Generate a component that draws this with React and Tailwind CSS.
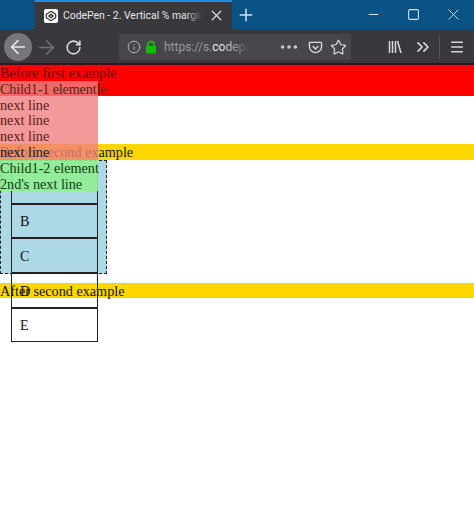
import { ArrowLeft, ArrowRight, RotateCw, Info, Ellipsis, Star, Plus, Minus, Square, X, Menu, ChevronsRight } from 'lucide-react'

function Box({ label }) {
  return (
    <div className="h-[34.7px] w-[86.5px] border border-[#222] pl-2 pt-[2px] flex items-center text-[14.2px] text-[#111]">{label}</div>
  )
}

function Browser() {
  return (
    <header className="font-['Roboto',sans-serif]">
      <div className="h-[29px] bg-[#0b5285] flex items-stretch">
        <div className="w-[35px]" />
        <div className="w-[197px] bg-[#38383d] border-t-2 border-[#1f8fe8] flex items-center pl-[9px] pr-[7px] gap-[5px]">
          <div className="w-[14px] h-[14px] rounded-[2px] bg-white flex items-center justify-center shrink-0">
            <svg viewBox="0 0 14 14" className="w-[12px] h-[12px]" fill="none" stroke="#222" strokeWidth="1.3">
              <path d="M7 1.500 12.500 5v4L7 12.500 1.500 9V5Z" />
              <path d="M7 5 9.500 7 7 9 4.500 7Z" />
            </svg>
          </div>
          <div className="relative flex-1 overflow-hidden">
            <span className="block text-[10.4px] text-[#e8e8ea] whitespace-nowrap">CodePen - 2. Vertical % margin</span>
            <div className="absolute right-0 top-0 bottom-0 w-[18px] bg-gradient-to-r from-transparent to-[#38383d]" />
          </div>
          <X className="w-[17px] h-[17px] text-[#d8d8da] shrink-0" strokeWidth={1.8} />
        </div>
        <div className="w-[27px] flex items-center justify-center">
          <Plus className="w-[20px] h-[20px] text-[#cfe3f2]" strokeWidth={1.8} />
        </div>
        <div className="flex-1 flex items-center justify-end pr-px">
          <div className="w-[40px] flex justify-center"><Minus className="w-[15px] h-[15px] text-[#cfe3f2]" strokeWidth={1.6} /></div>
          <div className="w-[40px] flex justify-center"><Square className="w-[13px] h-[13px] text-[#cfe3f2]" strokeWidth={2} /></div>
          <div className="w-[40px] flex justify-center"><X className="w-[19px] h-[19px] text-[#cfe3f2]" strokeWidth={1.2} /></div>
        </div>
      </div>
      <div className="h-[36px] pt-[2px] bg-[#38383d] border-b-2 border-[#3a1414] flex items-center">
        <div className="ml-[4px] w-[28px] h-[28px] shrink-0 rounded-full bg-[#77777b] flex items-center justify-center">
          <ArrowLeft className="w-[22px] h-[22px] text-[#e8e8ea]" strokeWidth={1.7} />
        </div>
        <ArrowRight className="ml-[3px] w-[23px] h-[23px] text-[#737377] shrink-0" strokeWidth={1.7} />
        <RotateCw className="ml-[7px] w-[17px] h-[17px] text-[#d8d8da] shrink-0" strokeWidth={2.2} />
        <div className="ml-[37px] w-[232px] h-[26px] shrink-0 rounded-[2px] bg-[#47474b] flex items-center pl-[8px] pr-[4px]">
          <Info className="w-[14px] h-[14px] text-[#b4b4b8]" strokeWidth={1.7} />
          <svg viewBox="0 0 12 14" className="ml-[4px] w-[12px] h-[14px]" fill="none">
            <path d="M3 7V4.500a3 3 0 0 1 6 0V7" stroke="#12bc00" strokeWidth="1.800" />
            <rect x="1" y="6" width="10" height="7.500" rx="1" fill="#12bc00" />
          </svg>
          <div className="relative ml-[7px] w-[85px] overflow-hidden">
            <span className="block whitespace-nowrap text-[12px] text-[#98989c]">https://s.<span className="text-[#e8e8ea]">codepe</span></span>
            <div className="absolute right-0 top-0 bottom-0 w-[28px] bg-gradient-to-r from-transparent to-[#47474b]" />
          </div>
          <Ellipsis className="ml-auto w-[22px] h-[22px] text-[#c8c8cc]" strokeWidth={2} />
          <svg viewBox="0 0 16 16" className="ml-[8px] w-[15px] h-[15px]" fill="none" stroke="#d8d8da" strokeWidth="1.500">
            <path d="M2.500 2.500h11a1 1 0 0 1 1 1V7a6.500 6.500 0 0 1-13 0V3.500a1 1 0 0 1 1-1Z" />
            <path d="M5 6.500 8 9.500l3-3" />
          </svg>
          <Star className="ml-[7px] w-[17px] h-[17px] text-[#d8d8da]" strokeWidth={1.7} />
        </div>
        <svg viewBox="0 0 14 14" className="ml-[37px] w-[14px] h-[14px] shrink-0" fill="none" stroke="#d8d8da" strokeWidth="1.500">
          <path d="M1.500 1v12M4.500 1v12M7.500 1v12M9.500 1l3.500 12" />
        </svg>
        <ChevronsRight className="ml-[11px] w-[20px] h-[20px] text-[#d8d8da] shrink-0" strokeWidth={2} />
        <div className="ml-[6px] w-px h-[24px] bg-[#57575b] shrink-0" />
        <Menu className="ml-[9px] w-[16px] h-[16px] text-[#d8d8da] shrink-0" strokeWidth={2.2} />
      </div>
    </header>
  )
}

export default function App() {
  return (
    <div className="w-[474px] h-[531px] bg-white overflow-hidden">
      <Browser />
      <main className="relative font-['Liberation_Serif',serif] text-[14.2px] leading-[15.7px] text-[#111]">
        <div className="h-[31px] bg-[#ff0000] pt-px text-[#5a0000]">Before first example</div>
        <div className="mt-[48px] h-[16px] bg-[#ffd700] pt-px">Before second example</div>
        <div className="relative z-10 h-[114px] w-[107px] border border-dashed border-[#222] bg-[#add8e6] pt-[8px] pl-[10px]">
          <Box label="A" />
          <Box label="B" />
          <Box label="C" />
          <Box label="D" />
          <Box label="E" />
        </div>
        <div className="mt-[9px] h-[15px] bg-[#ffd700] pt-px">After second example</div>

        <div className="absolute z-20 left-0 top-[16px] w-[98px] h-[79px] pt-px bg-[#f08080]/80 text-[#5a2020] whitespace-nowrap">
          <div className="tracking-[-0.15px]">Child1-1 elementle</div>
          <div>next line</div>
          <div>next line</div>
          <div>next line</div>
          <div className="text-[#222]">next line</div>
        </div>
        <div className="absolute z-20 left-0 top-[95px] w-[98px] h-[31px] pt-px bg-[#90ee90]/90 text-[#123f12] whitespace-nowrap">
          <div>Child1-2 element</div>
          <div>2nd's next line</div>
        </div>
      </main>
    </div>
  )
}
